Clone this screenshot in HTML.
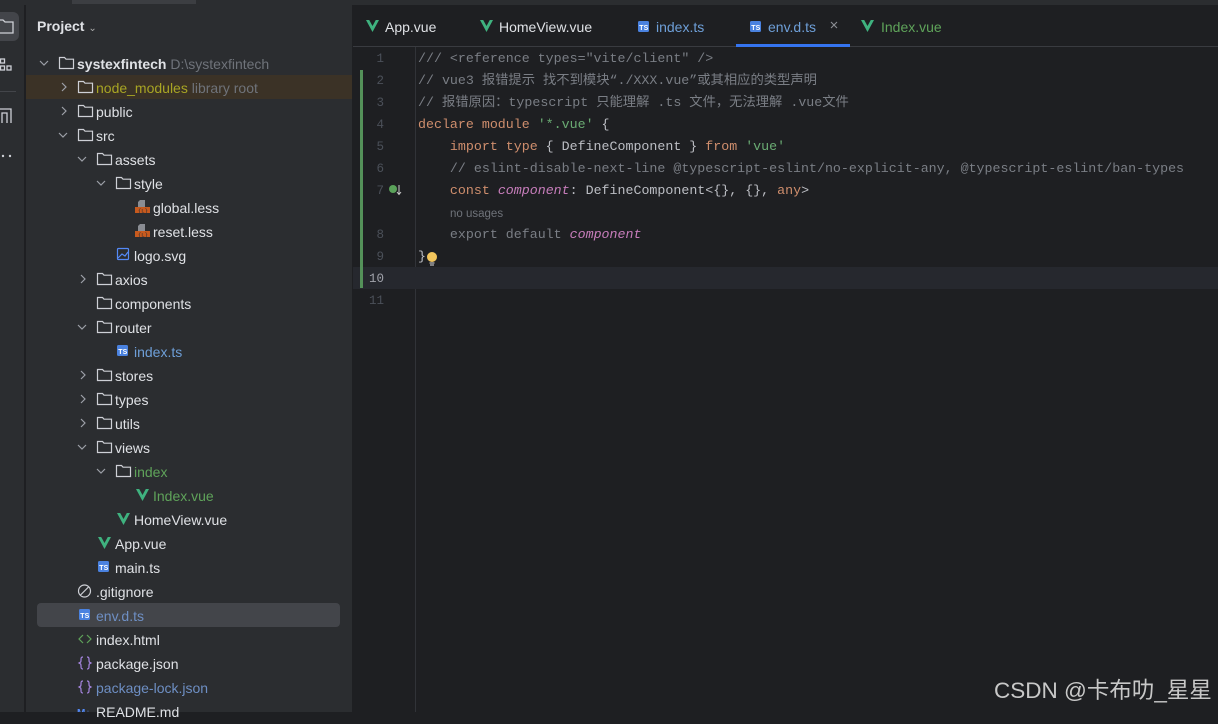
<!DOCTYPE html>
<html><head><meta charset="utf-8"><style>
*{margin:0;padding:0;box-sizing:border-box}
body{width:1218px;height:712px;overflow:hidden;background:#1e1f22;position:relative;font-family:"Liberation Sans","Noto Sans CJK SC",sans-serif;font-size:14px;color:#dfe1e5}
.abs{position:absolute}
.row{position:absolute;height:24px;line-height:24px;white-space:nowrap;margin-top:1px}
.code{position:absolute;left:418px;font-family:"Liberation Mono","Noto Sans CJK SC",monospace;font-size:13.3px;color:#bcbec4;white-space:pre;line-height:22px;height:22px;margin-top:1px}
.ln{position:absolute;left:360px;width:24px;text-align:right;font-family:"Liberation Mono",monospace;font-size:12.5px;color:#4b5059;line-height:22px;margin-top:1px}
.c{color:#7a7e85}.k{color:#cf8e6d}.s{color:#6aab73}.p{color:#c77dbb;font-style:italic}
.tab{position:absolute;top:5px;height:42px;line-height:44px;font-size:14px;color:#dfe1e5}
</style></head><body>
<div class="abs" style="left:0;top:0;width:1218px;height:5px;background:#2b2d30"></div>
<div class="abs" style="left:72px;top:0;width:124px;height:4px;background:#3c3e42"></div>
<div class="abs" style="left:0;top:5px;width:25px;height:707px;background:#2b2d30;border-right:1px solid #1e1f22"></div>
<div class="abs" style="left:-8px;top:12px;width:27px;height:29px;background:#43454a;border-radius:6px"></div>
<svg class="abs" style="left:0;top:16px" width="20" height="80" fill="none" stroke="#ced0d6" stroke-width="1.3">
<path d="M-3 4h6l2 2h8v11H-3z"/>
<rect x="0.5" y="43" width="4" height="4"/><rect x="0.5" y="50" width="4" height="4"/><rect x="7" y="50" width="4" height="4"/>
</svg>
<div class="abs" style="left:0;top:91px;width:16px;height:1px;background:#43454a"></div>
<svg class="abs" style="left:0;top:106px" width="20" height="60" fill="none" stroke="#ced0d6" stroke-width="1.3">
<path d="M0 3h11v14M7 17V7h-5v10"/>
<circle cx="3" cy="50" r="1.2" fill="#ced0d6" stroke="none"/><circle cx="10" cy="50" r="1.2" fill="#ced0d6" stroke="none"/>
</svg>
<div class="abs" style="left:26px;top:5px;width:326px;height:707px;background:#2b2d30"></div>
<div class="abs" style="left:352px;top:5px;width:1px;height:707px;background:#1e1f22"></div>
<div class="abs" style="left:37px;top:16px;font-weight:bold;font-size:14px;color:#dfe1e5;line-height:20px">Project <span style="font-weight:normal;font-size:10px;color:#aaa">&#8964;</span></div>
<div class="abs" style="left:26px;top:75px;width:326px;height:24px;background:#3b3226"></div>
<div class="abs" style="left:37px;top:603px;width:303px;height:24px;background:#43454a;border-radius:4px"></div>
<svg class="abs" style="left:0;top:0" width="352" height="712" fill="none" stroke="#ced0d6" stroke-width="1.2">
<defs>
<g id="fo"><path d="M0.5 1.5h5l1.5 1.7h7.5v9.3H0.5z"/></g>
<g id="cd"><path d="M0 0l4 4 4-4" stroke="#9da0a8"/></g>
<g id="cr"><path d="M0 0l4 4-4 4" stroke="#9da0a8"/></g>
<g id="ts"><rect x="0" y="0" width="11" height="11" rx="1.5" fill="#4a82e0" stroke="none"/><text x="1.3" y="9" font-size="7" font-weight="bold" fill="#fff" stroke="none" font-family="Liberation Sans">TS</text></g>
<g id="vue"><path d="M0 0h3.2l3.3 6 3.3-6H13L6.5 12z" fill="#3fb27f" stroke="none"/></g>
<g id="less"><path d="M5 0h5v7H3V2z" fill="#8a8d93" stroke="none"/><rect x="0" y="7" width="15" height="6" fill="#c75a1e" stroke="none"/><text x="3" y="12.3" font-size="5.5" fill="#2b2d30" stroke="none" font-family="Liberation Mono">{L}</text></g>
</defs>
<use href="#cd" x="40" y="61"/><use href="#cr" x="62" y="83"/><use href="#cr" x="62" y="107"/><use href="#cd" x="59" y="133"/>
<use href="#cd" x="78" y="157"/><use href="#cd" x="97" y="181"/><use href="#cr" x="81" y="275"/><use href="#cd" x="78" y="325"/>
<use href="#cr" x="81" y="371"/><use href="#cr" x="81" y="395"/><use href="#cr" x="81" y="419"/><use href="#cd" x="78" y="445"/><use href="#cd" x="97" y="469"/>
<use href="#fo" x="59" y="56"/><use href="#fo" x="78" y="80"/><use href="#fo" x="78" y="104"/><use href="#fo" x="78" y="128"/>
<use href="#fo" x="97" y="152"/><use href="#fo" x="116" y="176"/><use href="#fo" x="97" y="272"/><use href="#fo" x="97" y="296"/>
<use href="#fo" x="97" y="320"/><use href="#fo" x="97" y="368"/><use href="#fo" x="97" y="392"/><use href="#fo" x="97" y="416"/>
<use href="#fo" x="97" y="440"/><use href="#fo" x="116" y="464"/>
<use href="#less" x="135" y="200"/><use href="#less" x="135" y="224"/>
<rect x="117.5" y="248.5" width="11" height="11" rx="1" stroke="#548af7"/><path d="M118 258l4-4 3 2 3-4" stroke="#548af7"/>
<use href="#ts" x="117" y="345"/><use href="#vue" x="136" y="489"/><use href="#vue" x="117" y="513"/><use href="#vue" x="98" y="537"/>
<use href="#ts" x="98" y="561"/><use href="#ts" x="79" y="609"/>
<circle cx="84.5" cy="591" r="6" stroke="#ced0d6"/><path d="M80.5 595l8-8"/>
<path d="M83 635l-4 4 4 4M87 635l4 4-4 4" stroke="#5fa35a"/>
<path d="M83 657c-2 0-2 1-2 3s0 2-2 3c2 1 2 1 2 3s0 3 2 3M87 657c2 0 2 1 2 3s0 2 2 3c-2 1-2 1-2 3s0 3-2 3" stroke="#a887e3"/>
<path d="M83 681c-2 0-2 1-2 3s0 2-2 3c2 1 2 1 2 3s0 3 2 3M87 681c2 0 2 1 2 3s0 2 2 3c-2 1-2 1-2 3s0 3-2 3" stroke="#a887e3"/>
<text x="77" y="716" font-size="10" fill="#548af7" stroke="none" font-weight="bold">M↓</text>
</svg>
<div class="row" style="left:77px;top:51px"><b>systexfintech</b> <span style="color:#6f737a">D:\systexfintech</span></div>
<div class="row" style="left:96px;top:75px;color:#a8a524">node_modules <span style="color:#6f737a">library root</span></div>
<div class="row" style="left:96px;top:99px">public</div>
<div class="row" style="left:96px;top:123px">src</div>
<div class="row" style="left:115px;top:147px">assets</div>
<div class="row" style="left:134px;top:171px">style</div>
<div class="row" style="left:153px;top:195px">global.less</div>
<div class="row" style="left:153px;top:219px">reset.less</div>
<div class="row" style="left:134px;top:243px">logo.svg</div>
<div class="row" style="left:115px;top:267px">axios</div>
<div class="row" style="left:115px;top:291px">components</div>
<div class="row" style="left:115px;top:315px">router</div>
<div class="row" style="left:134px;top:339px;color:#6e9fd8">index.ts</div>
<div class="row" style="left:115px;top:363px">stores</div>
<div class="row" style="left:115px;top:387px">types</div>
<div class="row" style="left:115px;top:411px">utils</div>
<div class="row" style="left:115px;top:435px">views</div>
<div class="row" style="left:134px;top:459px;color:#5fa35a">index</div>
<div class="row" style="left:153px;top:483px;color:#5fa35a">Index.vue</div>
<div class="row" style="left:134px;top:507px">HomeView.vue</div>
<div class="row" style="left:115px;top:531px">App.vue</div>
<div class="row" style="left:115px;top:555px">main.ts</div>
<div class="row" style="left:96px;top:579px">.gitignore</div>
<div class="row" style="left:96px;top:603px;color:#6e8fc4">env.d.ts</div>
<div class="row" style="left:96px;top:627px">index.html</div>
<div class="row" style="left:96px;top:651px">package.json</div>
<div class="row" style="left:96px;top:675px;color:#6e8fc4">package-lock.json</div>
<div class="row" style="left:96px;top:699px">README.md</div>
<div class="abs" style="left:353px;top:46px;width:865px;height:1px;background:#393b40"></div>
<div class="abs" style="left:736px;top:44px;width:114px;height:3px;background:#3574f0"></div>
<svg class="abs" style="left:353px;top:0" width="600" height="46">
<defs><g id="v2"><path d="M0 0h3.2l3.3 6 3.3-6H13L6.5 12z" fill="#3fb27f"/></g>
<g id="t2"><rect width="11" height="11" rx="1.5" fill="#4a82e0"/><text x="1.3" y="9" font-size="7" font-weight="bold" fill="#fff" font-family="Liberation Sans">TS</text></g></defs>
<use href="#v2" x="13" y="20"/><use href="#v2" x="127" y="20"/><use href="#t2" x="285" y="21"/><use href="#t2" x="397" y="21"/><use href="#v2" x="508" y="20"/>
<path d="M478 22l6 6M484 22l-6 6" stroke="#8c8f95" stroke-width="1.1"/>
</svg>
<div class="tab" style="left:385px">App.vue</div>
<div class="tab" style="left:499px">HomeView.vue</div>
<div class="tab" style="left:656px;color:#6e9fd8">index.ts</div>
<div class="tab" style="left:768px;color:#6e9fd8">env.d.ts</div>
<div class="tab" style="left:881px;color:#5fa35a">Index.vue</div>
<div class="abs" style="left:415px;top:47px;width:1px;height:665px;background:#313338"></div>
<div class="abs" style="left:353px;top:267px;width:865px;height:22px;background:#26282e"></div>
<div class="abs" style="left:360px;top:70px;width:3px;height:218px;background:#549159"></div>
<div class="ln" style="top:47px">1</div><div class="ln" style="top:69px">2</div><div class="ln" style="top:91px">3</div>
<div class="ln" style="top:113px">4</div><div class="ln" style="top:135px">5</div><div class="ln" style="top:157px">6</div>
<div class="ln" style="top:179px">7</div><div class="ln" style="top:223px">8</div><div class="ln" style="top:245px">9</div>
<div class="ln" style="top:267px;color:#a1a3ab">10</div><div class="ln" style="top:289px">11</div>
<svg class="abs" style="left:388px;top:182px" width="16" height="16"><circle cx="5" cy="7" r="4" fill="#5aa25a"/><path d="M11 3v9M9 10l2 2.5 2-2.5" stroke="#ccc" fill="none" stroke-width="1"/></svg>
<div class="code c" style="top:47px">/// &lt;reference types="vite/client" /&gt;</div>
<div class="code c" style="top:69px">// vue3 报错提示 找不到模块“./XXX.vue”或其相应的类型声明</div>
<div class="code c" style="top:91px">// 报错原因：typescript 只能理解 .ts 文件，无法理解 .vue文件</div>
<div class="code" style="top:113px"><span class="k">declare module</span> <span class="s">'*.vue'</span> {</div>
<div class="code" style="top:135px">    <span class="k">import type</span> { DefineComponent } <span class="k">from</span> <span class="s">'vue'</span></div>
<div class="code c" style="top:157px">    // eslint-disable-next-line @typescript-eslint/no-explicit-any, @typescript-eslint/ban-types</div>
<div class="code" style="top:179px">    <span class="k">const</span> <span class="p">component</span>: DefineComponent&lt;{}, {}, <span class="k">any</span>&gt;</div>
<div class="abs" style="left:450px;top:204px;font-size:11.5px;color:#6f737a;line-height:20px">no usages</div>
<div class="code" style="top:223px">    <span class="c">export default</span> <span class="p">component</span></div>
<div class="code" style="top:245px">}</div>
<svg class="abs" style="left:425px;top:251px" width="14" height="16"><circle cx="7" cy="6" r="5" fill="#f2c55c"/><path d="M4.5 12h5M5 14h4" stroke="#ddd" stroke-width="1"/></svg>
<div class="abs" style="left:994px;top:677px;font-size:22.5px;color:#c8c8c8;line-height:28px;white-space:nowrap">CSDN @卡布叻_星星</div>
</body></html>
